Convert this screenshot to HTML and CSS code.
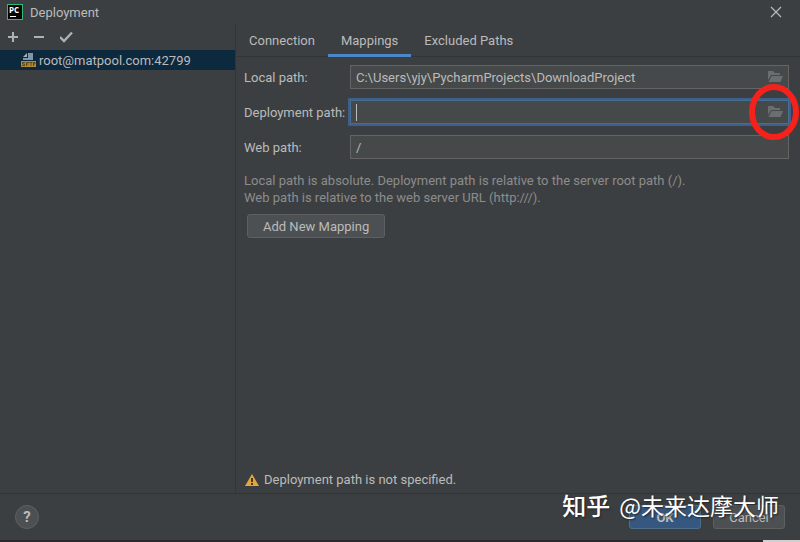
FILE: index.html
```html
<!DOCTYPE html>
<html lang="en">
<head>
    <meta charset="UTF-8">
    <meta name="viewport" content="width=device-width, initial-scale=1.0">
    <title>Deployment</title>
    <link rel="stylesheet" href="styles.css">
</head>
<body>
    <div class="dialog">
        <header class="title-bar">
            <svg class="logo" width="16" height="16" viewBox="0 0 16 16">
                <rect width="16" height="16" fill="#35b87c"/>
                <rect x="1" y="1" width="14" height="14" fill="#050505"/>
                <text x="2" y="9" class="logo-text">PC</text>
                <rect x="3" y="12" width="6" height="1" fill="#fff"/>
            </svg>
            <h1 class="title">Deployment</h1>
            <button class="icon-button close" aria-label="Close">
                <svg width="12" height="12" viewBox="0 0 12 12"><path d="M1 1l10 10M11 1L1 11" stroke="#b8babb" stroke-width="1.2"/></svg>
            </button>
        </header>

        <div class="content">
            <aside class="sidebar">
                <div class="toolbar">
                    <button class="icon-button" aria-label="Add">
                        <svg width="10" height="10" viewBox="0 0 10 10"><path d="M5 0v10M0 5h10" stroke="#afb1b3" stroke-width="2"/></svg>
                    </button>
                    <button class="icon-button" aria-label="Remove">
                        <svg width="10" height="10" viewBox="0 0 10 10"><path d="M0 5h10" stroke="#afb1b3" stroke-width="2"/></svg>
                    </button>
                    <button class="icon-button" aria-label="Use as default">
                        <svg width="14" height="12" viewBox="0 0 14 12"><path d="M0 6l4 4L12 1.500" fill="none" stroke="#afb1b3" stroke-width="2.4"/></svg>
                    </button>
                </div>
                <ul class="servers">
                    <li class="server selected">
                        <svg width="16" height="16" viewBox="0 0 16 16">
                            <path d="M7 1h5v7H2V6h5z" fill="#8297a5"/>
                            <path d="M2 5l4-4v4z" fill="#a4b4be"/>
                            <rect x="0" y="9" width="15" height="6" fill="#b48a35"/>
                            <path d="M4 10.5H1.500v1.500H3.500v1.500H1M5.500 14v-3.500H8M5.500 12H7.500M8.500 10.500h3M10 10.500V14M12.500 14v-3.500h1.500V12h-1.500" fill="none" stroke="#4b3a17" stroke-width=".8"/>
                        </svg>
                        root@matpool.com:42799
                    </li>
                </ul>
            </aside>

            <main class="main">
                <nav class="tabs">
                    <button class="tab">Connection</button>
                    <button class="tab active">Mappings</button>
                    <button class="tab">Excluded Paths</button>
                </nav>
                <form class="mappings">
                    <div class="row">
                        <label for="localPath">Local path:</label>
                        <div class="field">
                            <input type="text" id="localPath" value="C:\Users\yjy\PycharmProjects\DownloadProject">
                            <button type="button" class="icon-button browse" aria-label="Browse local path">
                                <svg width="16" height="12" viewBox="0 0 16 12"><path d="M1 0h5l2 2h5v2H4L1 9z" fill="#6b6e70"/><path d="M4.500 5H16l-2.500 6H1.500z" fill="#6b6e70"/></svg>
                            </button>
                        </div>
                    </div>
                    <div class="row">
                        <label for="deploymentPath">Deployment path:</label>
                        <div class="field focused">
                            <span class="caret"></span>
                            <input type="text" id="deploymentPath">
                            <button type="button" class="icon-button browse" aria-label="Browse deployment path">
                                <svg width="16" height="12" viewBox="0 0 16 12"><path d="M1 0h5l2 2h5v2H4L1 9z" fill="#6b6e70"/><path d="M4.500 5H16l-2.500 6H1.500z" fill="#6b6e70"/></svg>
                            </button>
                            <svg class="marker" width="50" height="56" viewBox="0 0 50 56"><ellipse cx="25" cy="28" rx="22" ry="25" fill="none" stroke="#f5221b" stroke-width="6"/></svg>
                        </div>
                    </div>
                    <div class="row">
                        <label for="webPath">Web path:</label>
                        <div class="field">
                            <input type="text" id="webPath" value="/">
                        </div>
                    </div>
                    <p class="hint">Local path is absolute. Deployment path is relative to the server root path (/).<br>Web path is relative to the web server URL (http:///).</p>
                    <button type="button" class="button add">Add New Mapping</button>
                </form>
                <p class="warning">
                    <svg width="14" height="12" viewBox="0 0 14 12"><path d="M7 0l7 12H0z" fill="#e0a83c"/><path d="M7 4v4M7 9v2" stroke="#45381f" stroke-width="2"/></svg>
                    Deployment path is not specified.
                </p>
            </main>
        </div>

        <footer class="footer">
            <button class="help" aria-label="Help">?</button>
            <div class="actions">
                <button class="button primary">OK</button>
                <button class="button">Cancel</button>
            </div>
            <div class="watermark" lang="zh"><span class="brand">知乎</span><span>@未来达摩大师</span></div>
        </footer>
    </div>
</body>
</html>
```

FILE: styles.css
```css
* {
    box-sizing: border-box;
}
body {
    margin: 0;
    background-color: #3c3f41;
    color: #bbbbbb;
    font-family: Roboto, "Noto Sans CJK SC", sans-serif;
    font-size: 13px;
    line-height: 17px;
}
h1, p, ul {
    margin: 0;
    padding: 0;
    font-size: 13px;
    font-weight: normal;
}
button, input {
    font: inherit;
    color: inherit;
}
svg {
    display: block;
    flex: none;
}
.dialog {
    display: flex;
    flex-direction: column;
    min-height: 100vh;
}
.icon-button {
    display: flex;
    align-items: center;
    padding: 0;
    border: none;
    background: none;
}

/* Title bar */
.title-bar {
    display: flex;
    align-items: center;
    gap: 7px;
    height: 24px;
    padding: 0 18px 0 7px;
}
.logo-text {
    font: bold 8px "Open Sans", sans-serif;
    fill: #fff;
}
.close {
    margin-left: auto;
}

/* Server list */
.content {
    display: flex;
    flex: 1;
}
.sidebar {
    width: 236px;
    border-right: 1px solid #323537;
}
.toolbar {
    display: flex;
    align-items: center;
    gap: 16px;
    height: 26px;
    padding: 0 8px;
}
.servers {
    list-style: none;
}
.server {
    display: flex;
    align-items: center;
    gap: 2px;
    height: 20px;
    padding-left: 21px;
}
.selected {
    background-color: #0d293e;
}

/* Tabs */
.main {
    display: flex;
    flex-direction: column;
    flex: 1;
}
.tabs {
    display: flex;
    height: 33px;
    border-bottom: 1px solid #323537;
}
.tab {
    height: 33px;
    padding: 2px 13px 0;
    border: none;
    border-bottom: 3px solid transparent;
    background: none;
}
.active {
    border-bottom-color: #4a88c7;
}

/* Mapping form */
.mappings {
    display: flex;
    flex-direction: column;
    gap: 11px;
    padding: 8px 11px 8px 8px;
}
.row {
    display: grid;
    grid-template-columns: 106px 1fr;
    align-items: center;
    white-space: nowrap;
}
.field {
    position: relative;
    display: flex;
    align-items: center;
    height: 24px;
    border: 1px solid #646464;
    background-color: #45494a;
}
.field input {
    flex: 1;
    min-width: 0;
    padding: 0 5px;
    border: none;
    outline: none;
    background: none;
}
.focused {
    z-index: 1;
    border-color: #466d94;
    box-shadow: 0 0 0 2px #3f5f8a;
}
.caret {
    position: absolute;
    left: 5px;
    width: 1px;
    height: 17px;
    background-color: #bbbbbb;
}
.browse {
    padding-right: 5px;
}
.marker {
    position: absolute;
    right: -11px;
    top: -17px;
}
.hint {
    padding-top: 2px;
    color: #8c8c8c;
}
.button {
    height: 24px;
    min-width: 72px;
    padding: 0 15px;
    border: 1px solid #5e6060;
    border-radius: 3px;
    background-color: #4c5052;
}
.add {
    align-self: flex-start;
    margin: -3px 3px 0;
}
.warning {
    display: flex;
    align-items: center;
    gap: 5px;
    margin-top: auto;
    padding: 0 9px 5px;
}

/* Footer */
.footer {
    position: relative;
    display: flex;
    align-items: center;
    justify-content: space-between;
    height: 49px;
    padding: 0 15px;
    border-top: 1px solid #323537;
    border-bottom: 2px solid #2b2b2d;
}
.footer::after {
    content: "";
    position: absolute;
    right: 0;
    bottom: -2px;
    width: 37px;
    height: 2px;
    background-color: #d0d0d0;
}
.help {
    width: 24px;
    height: 24px;
    padding: 0;
    border: 1px solid #5e6060;
    border-radius: 50%;
    background-color: #4c5052;
    font-weight: bold;
    font-size: 15px;
}
.actions {
    display: flex;
    gap: 12px;
}
.primary {
    border-color: #4c708c;
    background-color: #365880;
    font-weight: bold;
}
.watermark {
    position: absolute;
    right: 21px;
    top: -5px;
    display: flex;
    align-items: center;
    gap: 9px;
    color: #ffffff;
    font-family: "Noto Sans CJK SC", sans-serif;
    font-size: 23px;
    line-height: 32px;
    text-shadow: 1px 1px 2px #222222;
}
.brand {
    font-size: 24px;
    font-weight: 500;
}
```
